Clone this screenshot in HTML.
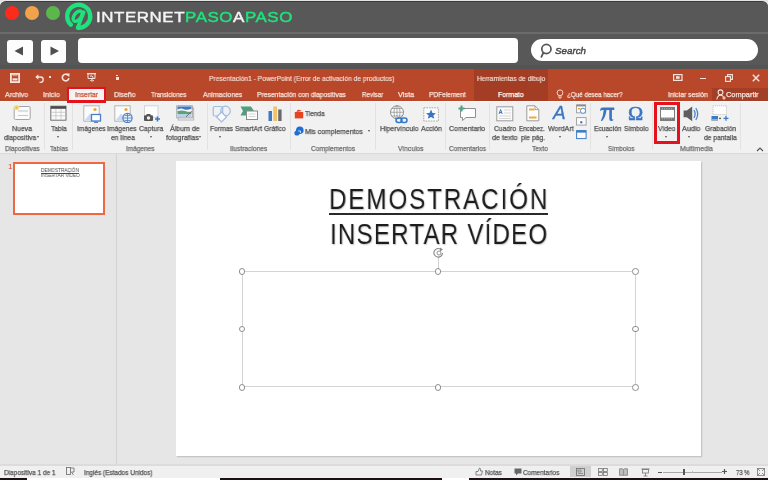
<!DOCTYPE html>
<html><head><meta charset="utf-8">
<style>
*{margin:0;padding:0;box-sizing:border-box}
html,body{width:768px;height:480px;overflow:hidden;background:#fff;font-family:"Liberation Sans",sans-serif}
.a{position:absolute}
.t{position:absolute;white-space:nowrap;line-height:1;transform-origin:0 0;will-change:transform}
.sk{-webkit-text-stroke:0.25px currentColor}
.sk2{-webkit-text-stroke:0.12px currentColor}
.sep{position:absolute;top:103px;width:1px;height:47px;background:#e2e2e2}
</style></head><body>

<div class="a" style="left:0;top:0;width:768px;height:14px;background:#e4e4e4"></div>
<div class="a" style="left:0;top:1px;width:768px;height:68px;background:#3c3c3c;border-radius:6px 6px 0 0"></div>
<div class="a" style="left:0;top:2px;width:768px;height:67px;background:#585858;border-radius:5px 5px 0 0"></div>
<div class="a" style="left:5.4px;top:5.8px;width:14px;height:14px;border-radius:50%;background:#fd2b1c"></div>
<div class="a" style="left:25.1px;top:6.2px;width:14px;height:14px;border-radius:50%;background:#f2a24b"></div>
<div class="a" style="left:45.5px;top:6.2px;width:14px;height:14px;border-radius:50%;background:#5db64b"></div>
<svg class="a" style="left:62px;top:0px" width="34" height="33" viewBox="0 0 34 33"><path d="M8.86 24.7 A11.5 11.5 0 1 1 15.9 27.77" fill="none" stroke="#20e27c" stroke-width="4.4" stroke-linecap="round"/><ellipse cx="15.6" cy="16.2" rx="6" ry="3.3" transform="rotate(-52 15.6 16.2)" fill="none" stroke="#20e27c" stroke-width="3.4"/><path d="M21.8 12.2 L15.9 27.2" stroke="#20e27c" stroke-width="3.6" stroke-linecap="round"/></svg>
<div class="t" style="left:95.8px;top:9.24px;font-size:15.4px;letter-spacing:0.5px;transform:scaleX(1.1);color:#f4f4f4;-webkit-text-stroke:0.45px #f4f4f4">INTERNET<span style="color:#20e27c;-webkit-text-stroke-color:#20e27c">PASO</span>A<span style="color:#20e27c;-webkit-text-stroke-color:#20e27c">PASO</span></div>
<div class="a" style="left:0;top:32px;width:768px;height:1.5px;background:#6b6b6b"></div>
<div class="a" style="left:0;top:65px;width:768px;height:4px;background:#545454"></div>
<div class="a" style="left:7px;top:40px;width:26px;height:22.5px;background:#fdfdfd;border-radius:3px"></div>
<div class="a" style="left:40.5px;top:40px;width:25.5px;height:22.5px;background:#fdfdfd;border-radius:3px"></div>
<svg class="a" style="left:13px;top:45px" width="14" height="12" viewBox="0 0 14 12"><path d="M1.5 6 L10 1.5 V10.5 Z" fill="#4e4e4e"/></svg>
<svg class="a" style="left:49px;top:45px" width="14" height="12" viewBox="0 0 14 12"><path d="M1.5 1.5 L10 6 L1.5 10.5 Z" fill="#4e4e4e"/></svg>
<div class="a" style="left:77.8px;top:37.8px;width:440.5px;height:25px;background:#fff;border-radius:4px"></div>
<div class="a" style="left:530.6px;top:38.8px;width:227px;height:22.5px;background:#fff;border-radius:11.5px"></div>
<svg class="a" style="left:538px;top:41px" width="18" height="18" viewBox="0 0 18 18"><circle cx="8.4" cy="8" r="4.6" fill="none" stroke="#555" stroke-width="1.7"/><path d="M5.4 11.6 L3.4 15.8" stroke="#555" stroke-width="1.8" stroke-linecap="round"/></svg>
<div class="t" style="left:555px;top:46.2px;font-size:9.6px;font-style:italic;color:#4a4a4a;-webkit-text-stroke:0.45px #4a4a4a;transform:scaleX(1.02)">Search</div>
<div class="a" style="left:0;top:69px;width:768px;height:32px;background:#b9482b"></div>
<div class="a" style="left:474.2px;top:69px;width:74px;height:31.5px;background:#a33d23"></div>
<div class="a" style="left:712px;top:87.8px;width:56px;height:12.8px;background:#a33f26"></div>
<svg class="a" style="left:10px;top:72.5px" width="10" height="10" viewBox="0 0 10 10"><rect x="0.9" y="0.9" width="8.2" height="8.2" fill="none" stroke="#f6e4dd" stroke-width="1.8"/><rect x="2.5" y="5.3" width="5" height="2.2" fill="#f6e4dd"/><rect x="2.5" y="1.8" width="5" height="1.4" fill="#f6e4dd" opacity="0.5"/></svg>
<svg class="a" style="left:34.5px;top:73.5px" width="10" height="9" viewBox="0 0 10 9"><path d="M2.5 3 H5.5 A2.7 2.7 0 0 1 5.5 8.4 H4.5" fill="none" stroke="#f6e4dd" stroke-width="1.4"/><path d="M0.3 3 L3.3 0.3 V5.7 Z" fill="#f6e4dd"/></svg>
<div class="a" style="left:49px;top:76px;width:2px;height:2px;background:#f6e4dd"></div>
<svg class="a" style="left:61.3px;top:73px" width="9" height="9" viewBox="0 0 9 9"><path d="M7 2.2 A3.3 3.3 0 1 0 7.9 5.2" fill="none" stroke="#f6e4dd" stroke-width="1.6"/><path d="M5 0.6 L8.6 0.6 L8.2 4.2 Z" fill="#f6e4dd"/></svg>
<svg class="a" style="left:87px;top:72.8px" width="9" height="9" viewBox="0 0 9 9"><path d="M0 0.7 H9" stroke="#f6e4dd" stroke-width="1.3"/><path d="M1 1 V5.5 H8 V1" fill="none" stroke="#f6e4dd" stroke-width="1"/><path d="M3 3.2 Q5.5 2 6 4 Q6.5 6.5 3.5 7.5 Q5 8.5 7 7.5" fill="none" stroke="#f6e4dd" stroke-width="1"/></svg>
<div class="a" style="left:116px;top:75px;width:2px;height:1px;background:#f6e4dd"></div>
<div class="a" style="left:115.5px;top:77px;width:3px;height:2.5px;background:#f6e4dd"></div>
<svg class="a" style="left:672.5px;top:74.2px" width="10" height="7" viewBox="0 0 10 7"><rect x="0.6" y="0.6" width="8.4" height="5.8" fill="none" stroke="#f6e4dd" stroke-width="1.2"/><rect x="3" y="2.2" width="3.6" height="2.6" fill="#f6e4dd"/></svg>
<div class="a" style="left:700.3px;top:77.6px;width:5.8px;height:1.6px;background:#f6e4dd"></div>
<svg class="a" style="left:725px;top:74px" width="8" height="8" viewBox="0 0 8 8"><rect x="0.6" y="2.6" width="4.8" height="4.8" fill="none" stroke="#f6e4dd" stroke-width="1.1"/><path d="M2.6 2.6 V0.6 H7.4 V5.4 H5.4" fill="none" stroke="#f6e4dd" stroke-width="1.1"/></svg>
<svg class="a" style="left:751.5px;top:74px" width="8" height="8" viewBox="0 0 8 8"><path d="M0.8 0.8 L7.2 7.2 M7.2 0.8 L0.8 7.2" stroke="#f6e4dd" stroke-width="1.4"/></svg>
<div class="a" style="left:67px;top:87.3px;width:39px;height:15.3px;background:#f3f3f3;border:2.4px solid #e5121d"></div>
<svg class="a" style="left:556px;top:89px" width="8" height="11" viewBox="0 0 8 11"><circle cx="4" cy="3.8" r="2.9" fill="none" stroke="#f6e4dd" stroke-width="0.9"/><path d="M3 6.6 V9 H5 V6.6" fill="none" stroke="#f6e4dd" stroke-width="0.9"/></svg>
<svg class="a" style="left:715.5px;top:89px" width="11" height="11" viewBox="0 0 11 11"><circle cx="4.5" cy="3.3" r="2.4" fill="none" stroke="#f6e4dd" stroke-width="1.1"/><path d="M0.8 10.5 Q1.4 6.3 4.5 6.3 Q6.5 6.3 7.4 7.6" fill="none" stroke="#f6e4dd" stroke-width="1.1"/><path d="M6.3 9 H9.8 M8 7.2 V10.8" stroke="#f6e4dd" stroke-width="1"/></svg>
<div class="a" style="left:0;top:100.6px;width:768px;height:52px;background:#f1f1f1"></div>
<div class="a" style="left:0;top:100.6px;width:768px;height:1.2px;background:#fafafa"></div>
<div class="a" style="left:67px;top:100.2px;width:39px;height:2.4px;background:#e5121d"></div>
<div class="sep" style="left:43.6px"></div>
<div class="sep" style="left:72.3px"></div>
<div class="sep" style="left:207px"></div>
<div class="sep" style="left:290.2px"></div>
<div class="sep" style="left:375.2px"></div>
<div class="sep" style="left:445.3px"></div>
<div class="sep" style="left:488.5px"></div>
<div class="sep" style="left:590px"></div>
<div class="sep" style="left:652.2px"></div>
<div class="sep" style="left:739.6px"></div>
<svg class="a" style="left:13px;top:104px" width="19" height="17" viewBox="0 0 19 17"><rect x="1.2" y="2.5" width="16" height="13" rx="1.3" fill="#fbfbfb" stroke="#a5a5a5" stroke-width="1"/><path d="M5 7 H15" stroke="#b9c3cf" stroke-width="1"/><path d="M5 11.5 H15" stroke="#c2c2c2" stroke-width="0.9"/><circle cx="3.6" cy="3.6" r="2.6" fill="#f6dc8a"/><circle cx="3.6" cy="3.6" r="1.2" fill="#f0b84a"/></svg>
<svg class="a" style="left:50px;top:105px" width="17" height="16" viewBox="0 0 17 16"><rect x="0.8" y="1.2" width="15.2" height="14" fill="#fafafa" stroke="#707070" stroke-width="1"/><rect x="0.8" y="1.2" width="15.2" height="2.6" fill="#4a4a4a"/><path d="M0.8 7.3 H16 M0.8 10.8 H16 M5.9 3.8 V15 M11 3.8 V15" stroke="#bdbdbd" stroke-width="0.7"/></svg>
<svg class="a" style="left:82.5px;top:105px" width="19" height="18" viewBox="0 0 19 18"><rect x="0.8" y="0.8" width="15.4" height="15.4" fill="#fbfbfb" stroke="#b5b5b5" stroke-width="1"/><path d="M1.5 15.5 L7 8.5 L11 13 L11 15.5 Z" fill="#c9dbef"/><circle cx="12" cy="4.5" r="1.6" fill="#eea33a"/><rect x="8.5" y="9.5" width="9" height="6.5" fill="#fff" stroke="#4e7ec3" stroke-width="1.3"/><path d="M13 16 V17.5 M11 17.6 H15" stroke="#4e7ec3" stroke-width="1"/></svg>
<svg class="a" style="left:114px;top:105px" width="19" height="18" viewBox="0 0 19 18"><rect x="0.8" y="0.8" width="15.4" height="15.4" fill="#fbfbfb" stroke="#b5b5b5" stroke-width="1"/><path d="M1.5 15.5 L7 8.5 L11 13 L11 15.5 Z" fill="#c9dbef"/><circle cx="12" cy="4.5" r="1.6" fill="#eea33a"/><circle cx="13.5" cy="13" r="4.6" fill="#e8eef7" stroke="#4e7ec3" stroke-width="1.2"/><path d="M9 13 H18 M13.5 8.5 V17.5 M10.5 10.5 H16.5 M10.5 15.5 H16.5" stroke="#4e7ec3" stroke-width="0.8"/></svg>
<svg class="a" style="left:142.5px;top:105px" width="18" height="17" viewBox="0 0 18 17"><rect x="1.5" y="0.8" width="13.5" height="11.5" fill="#fdfdfd" stroke="#cfcfcf" stroke-width="0.9"/><rect x="1" y="10.3" width="9" height="5.6" rx="1" fill="#555"/><rect x="3.5" y="9" width="4" height="2" fill="#555"/><circle cx="5.5" cy="13" r="1.7" fill="#f1f1f1"/><path d="M12 14 H17 M14.5 11.5 V16.5" stroke="#3a78c9" stroke-width="1.6"/></svg>
<svg class="a" style="left:175.5px;top:105px" width="19" height="16" viewBox="0 0 19 16"><rect x="2.2" y="3" width="15.5" height="12" fill="#f2f2f2" stroke="#b0b0b0" stroke-width="0.9"/><rect x="0.8" y="0.8" width="15.5" height="12" fill="#fff" stroke="#a0a0a0" stroke-width="1"/><rect x="1.5" y="1.5" width="14" height="3.5" fill="#3c78c3"/><path d="M1.5 4.6 Q5 2.8 8 4.2 T15.5 3.5 V5.5 H1.5 Z" fill="#eef4fb"/><path d="M1.5 6 Q6 4.8 10 6.2 T15.5 6 V9 H1.5 Z" fill="#5aa56e"/><rect x="1.5" y="9" width="14" height="3" fill="#b8d0ea"/><path d="M10 11.8 L15.5 6.5" stroke="#6e6e6e" stroke-width="1"/></svg>
<svg class="a" style="left:211.5px;top:104.5px" width="20" height="18" viewBox="0 0 20 18"><rect x="1.2" y="1.5" width="9.5" height="9.5" rx="1.5" fill="none" stroke="#9fbbe0" stroke-width="1.2"/><circle cx="13.5" cy="6" r="4.8" fill="none" stroke="#9fbbe0" stroke-width="1.2"/><path d="M9.5 7 L14.5 12 L9.5 17 L4.5 12 Z" fill="#fbfbfb" stroke="#9fbbe0" stroke-width="1.2"/></svg>
<svg class="a" style="left:239.5px;top:106px" width="19" height="15" viewBox="0 0 19 15"><path d="M0.5 0.5 H11 L14 5 L11 9.5 H0.5 L3 5 Z" fill="#4f9e7c"/><rect x="6.5" y="5" width="11" height="8.5" fill="#fdfdfd" stroke="#8c8c8c" stroke-width="1"/><path d="M8.5 8 H15.5 M8.5 10.5 H15.5" stroke="#cfcfcf" stroke-width="0.9"/></svg>
<svg class="a" style="left:267.5px;top:105.5px" width="15" height="16" viewBox="0 0 15 16"><rect x="0.5" y="5" width="3.5" height="10" fill="#3f79c0"/><rect x="5.3" y="0.5" width="3.7" height="14.5" fill="#f0c26a"/><rect x="10.2" y="3.5" width="3.4" height="11.5" fill="#6a6a6a"/></svg>
<svg class="a" style="left:294px;top:108.5px" width="10" height="10" viewBox="0 0 10 10"><path d="M0.8 3 H9.2 V9.4 H0.8 Z" fill="#e64420"/><path d="M2.5 3 Q3 0.5 5 0.8 L8 2 Z" fill="#e64420"/></svg>
<svg class="a" style="left:294px;top:126px" width="10" height="10" viewBox="0 0 10 10"><circle cx="5.8" cy="4.3" r="3.8" fill="#1f6fd1"/><circle cx="3" cy="7" r="2.6" fill="#1f6fd1"/><path d="M4 5 H6.5 V7" stroke="#f1f1f1" stroke-width="0.8" fill="none"/></svg>
<svg class="a" style="left:389px;top:104.5px" width="20" height="19" viewBox="0 0 20 19"><circle cx="8" cy="7.3" r="6.5" fill="#fafafa" stroke="#8d8d8d" stroke-width="1"/><path d="M1.5 7.3 H14.5 M8 0.8 V13.8 M3 3.5 H13 M3 11 H13" stroke="#8d8d8d" stroke-width="0.7"/><ellipse cx="8" cy="7.3" rx="3" ry="6.5" fill="none" stroke="#8d8d8d" stroke-width="0.7"/><rect x="7" y="13" width="6" height="4.5" rx="2.2" fill="none" stroke="#3478c8" stroke-width="1.5"/><rect x="12" y="13" width="6" height="4.5" rx="2.2" fill="none" stroke="#3478c8" stroke-width="1.5"/></svg>
<svg class="a" style="left:423px;top:106.5px" width="17" height="15" viewBox="0 0 17 15"><rect x="0.8" y="0.8" width="14.6" height="13.2" fill="#fbfbfb" stroke="#9d9d9d" stroke-width="0.9" stroke-dasharray="1.6 1"/><path d="M8 2.6 L9.5 6 L13 6.2 L10.3 8.4 L11.3 11.8 L8 9.9 L4.7 11.8 L5.7 8.4 L3 6.2 L6.5 6 Z" fill="#3873c4"/></svg>
<svg class="a" style="left:457.5px;top:104.5px" width="19" height="17" viewBox="0 0 19 17"><path d="M2.5 3.5 H17.5 V12.5 H8 L4.5 15.5 V12.5 H2.5 Z" fill="#fdfdfd" stroke="#8f8f8f" stroke-width="1"/><path d="M3.5 0.5 V6.5 M0.5 3.5 H6.5" stroke="#4fa384" stroke-width="2"/></svg>
<svg class="a" style="left:496px;top:105.5px" width="18" height="16" viewBox="0 0 18 16"><rect x="0.8" y="0.8" width="16" height="14" fill="#fbfbfb" stroke="#9a9a9a" stroke-width="1"/><path d="M3 8 L4.6 3.5 L6.2 8 M3.6 6.5 H5.6" fill="none" stroke="#3a75c4" stroke-width="1"/><path d="M8 4 H15 M8 7 H15 M3 10 H15 M3 12.5 H15" stroke="#cfcfcf" stroke-width="0.8"/></svg>
<svg class="a" style="left:526px;top:105px" width="14" height="17" viewBox="0 0 14 17"><path d="M0.8 0.8 H9 L12.8 4.6 V15.8 H0.8 Z" fill="#fdfdfd" stroke="#9a9a9a" stroke-width="1"/><path d="M9 0.8 V4.6 H12.8" fill="none" stroke="#9a9a9a" stroke-width="0.9"/><path d="M3 4.5 H8.5 M3 12.5 H10.5" stroke="#eda93a" stroke-width="1.8"/></svg>
<div class="t" style="left:552.5px;top:104px;font-size:18px;font-style:italic;font-family:'Liberation Sans',sans-serif;color:#3a75c4;transform:scaleX(1.05);-webkit-text-stroke:0.3px #3a75c4">A</div>
<svg class="a" style="left:576px;top:104px" width="11" height="10" viewBox="0 0 11 10"><rect x="0.6" y="0.8" width="9" height="8" fill="#fbfbfb" stroke="#9a9a9a" stroke-width="0.9"/><rect x="0.6" y="0.8" width="9" height="1.6" fill="#8a8a8a"/><circle cx="7" cy="6.8" r="2.6" fill="#fff" stroke="#4c84c8" stroke-width="0.9"/><rect x="2" y="4" width="2.5" height="1.5" fill="#eda93a"/></svg>
<svg class="a" style="left:576px;top:117px" width="11" height="9" viewBox="0 0 11 9"><rect x="0.6" y="0.6" width="9.5" height="7.5" fill="#fbfbfb" stroke="#9a9a9a" stroke-width="0.9"/><rect x="4.3" y="4.3" width="2" height="2" fill="#2f68b8"/></svg>
<svg class="a" style="left:576px;top:130px" width="11" height="9.5" viewBox="0 0 11 9.5"><rect x="0.6" y="0.6" width="9.5" height="8" fill="#fbfbfb" stroke="#3e7ac6" stroke-width="1"/><rect x="0.6" y="0.6" width="9.5" height="2" fill="#3e7ac6"/></svg>
<svg class="a" style="left:598px;top:105.8px" width="18" height="17" viewBox="0 0 18 17"><path d="M2.3 3 Q3 1.6 5.2 1.6 H16.3 V4.1 H4.8 Q3.2 4.1 2.3 5.2 Z" fill="#3a75c4"/><path d="M5.8 3.5 H8.6 Q7.8 10.5 4.6 14.6 Q3.8 15.3 2.8 14.9 Q5.3 10 5.8 3.5 Z" fill="#3a75c4"/><path d="M11.3 3.5 H13.9 V12.5 Q13.9 13.9 15.6 13.4 Q15.2 15 13.2 15 Q11.3 15 11.3 12.8 Z" fill="#3a75c4"/></svg>
<div class="t" style="left:627.6px;top:104.4px;font-size:19.5px;font-family:'Liberation Serif',serif;color:#3a75c4;-webkit-text-stroke:0.6px #3a75c4;transform:scaleX(1.05)">Ω</div>
<div class="a" style="left:654px;top:101.9px;width:26.3px;height:42px;border:3px solid #e5121d"></div>
<svg class="a" style="left:659.5px;top:106.5px" width="15" height="14" viewBox="0 0 15 14"><rect x="0.5" y="0.5" width="14" height="13" fill="#fdfdfd" stroke="#7c7c7c" stroke-width="1"/><rect x="0.5" y="0.5" width="14" height="2.4" fill="#767676"/><rect x="0.5" y="10.6" width="14" height="2.4" fill="#767676"/><path d="M1.8 1.7 H13.5 M1.8 11.8 H13.5" stroke="#d8d8d8" stroke-width="0.7" stroke-dasharray="1.1 1.2"/></svg>
<svg class="a" style="left:682.5px;top:105.5px" width="17" height="16" viewBox="0 0 17 16"><path d="M0.6 4.6 H3.8 L9.2 0.6 V15.2 L3.8 11.2 H0.6 Z" fill="#5e5e5e"/><path d="M11 4.2 Q13.2 8 11 11.8" fill="none" stroke="#4d84c8" stroke-width="1.3"/><path d="M12.8 2 Q16.6 8 12.8 14" fill="none" stroke="#4d84c8" stroke-width="1.3"/></svg>
<svg class="a" style="left:710.5px;top:104.5px" width="19" height="17" viewBox="0 0 19 17"><rect x="2" y="0.8" width="13.5" height="8.7" fill="#fdfdfd" stroke="#bdbdbd" stroke-width="0.8" stroke-dasharray="1.2 0.8"/><rect x="0.5" y="11" width="6.5" height="4.5" fill="#3a7bc8"/><rect x="0.5" y="14" width="6.5" height="1.6" fill="#aaa"/><circle cx="9" cy="13.3" r="0.9" fill="#444"/><path d="M12.5 13.3 H17.5 M15 10.8 V15.8" stroke="#3a7bc8" stroke-width="1.3"/></svg>
<svg class="a" style="left:756px;top:145.5px" width="8" height="6" viewBox="0 0 8 6"><path d="M1 5 L4 2 L7 5" fill="none" stroke="#555" stroke-width="1.2"/></svg>
<div class="a" style="left:36.8px;top:136.3px;width:0;height:0;border-left:1.7px solid transparent;border-right:1.7px solid transparent;border-top:2.4px solid #505050"></div>
<div class="a" style="left:56.5px;top:136.3px;width:0;height:0;border-left:1.7px solid transparent;border-right:1.7px solid transparent;border-top:2.4px solid #505050"></div>
<div class="a" style="left:150.0px;top:136.3px;width:0;height:0;border-left:1.7px solid transparent;border-right:1.7px solid transparent;border-top:2.4px solid #505050"></div>
<div class="a" style="left:199.10000000000002px;top:136.3px;width:0;height:0;border-left:1.7px solid transparent;border-right:1.7px solid transparent;border-top:2.4px solid #505050"></div>
<div class="a" style="left:219.3px;top:136.3px;width:0;height:0;border-left:1.7px solid transparent;border-right:1.7px solid transparent;border-top:2.4px solid #505050"></div>
<div class="a" style="left:367.5px;top:129.70000000000002px;width:0;height:0;border-left:1.7px solid transparent;border-right:1.7px solid transparent;border-top:2.4px solid #505050"></div>
<div class="a" style="left:559.0999999999999px;top:136.3px;width:0;height:0;border-left:1.7px solid transparent;border-right:1.7px solid transparent;border-top:2.4px solid #505050"></div>
<div class="a" style="left:605.5px;top:136.3px;width:0;height:0;border-left:1.7px solid transparent;border-right:1.7px solid transparent;border-top:2.4px solid #505050"></div>
<div class="a" style="left:664.5999999999999px;top:136.3px;width:0;height:0;border-left:1.7px solid transparent;border-right:1.7px solid transparent;border-top:2.4px solid #505050"></div>
<div class="a" style="left:688.3px;top:136.3px;width:0;height:0;border-left:1.7px solid transparent;border-right:1.7px solid transparent;border-top:2.4px solid #505050"></div>
<div class="a" style="left:0;top:152.6px;width:768px;height:312px;background:#e6e6e6"></div>
<div class="a" style="left:0;top:152.6px;width:768px;height:1px;background:#dadada"></div>
<div class="a" style="left:116px;top:153px;width:1px;height:312px;background:#d3d3d3"></div>
<div class="t" style="left:7.6px;top:163.2px;font-size:8px;color:#d04a2c">1</div>
<div class="a" style="left:13.2px;top:161.9px;width:91.4px;height:53.3px;background:#fff;border:2px solid #ee6843"></div>
<div class="t" style="left:40.8px;top:169px;font-size:4.9px;color:#444;text-decoration:underline;transform:scaleX(0.95)">DEMOSTRACIÓN</div>
<div class="t" style="left:41px;top:174.3px;font-size:4.9px;color:#555;transform:scaleX(0.95)">INSERTAR VÍDEO</div>
<div class="a" style="left:176px;top:161px;width:525px;height:295px;background:#fff;box-shadow:0.8px 0.8px 1.2px rgba(0,0,0,0.18)"></div>
<div class="a" style="left:328.8px;top:213.4px;width:219.2px;height:1.8px;background:#2a2a2a"></div>
<div class="a" style="left:241.5px;top:270.8px;width:394px;height:116.2px;border:1px solid #d4d4d4"></div>
<div class="a" style="left:438px;top:257px;width:1px;height:14px;background:#d0d0d0"></div>
<div class="a" style="left:238.5px;top:267.90000000000003px;width:6.8px;height:6.8px;border-radius:50%;background:#fff;border:1.5px solid #8e8e8e"></div>
<div class="a" style="left:434.70000000000005px;top:267.90000000000003px;width:6.8px;height:6.8px;border-radius:50%;background:#fff;border:1.5px solid #8e8e8e"></div>
<div class="a" style="left:632.2px;top:267.90000000000003px;width:6.8px;height:6.8px;border-radius:50%;background:#fff;border:1.5px solid #8e8e8e"></div>
<div class="a" style="left:238.5px;top:325.6px;width:6.8px;height:6.8px;border-radius:50%;background:#fff;border:1.5px solid #8e8e8e"></div>
<div class="a" style="left:632.2px;top:325.6px;width:6.8px;height:6.8px;border-radius:50%;background:#fff;border:1.5px solid #8e8e8e"></div>
<div class="a" style="left:238.5px;top:383.8px;width:6.8px;height:6.8px;border-radius:50%;background:#fff;border:1.5px solid #8e8e8e"></div>
<div class="a" style="left:434.70000000000005px;top:383.8px;width:6.8px;height:6.8px;border-radius:50%;background:#fff;border:1.5px solid #8e8e8e"></div>
<div class="a" style="left:632.2px;top:383.8px;width:6.8px;height:6.8px;border-radius:50%;background:#fff;border:1.5px solid #8e8e8e"></div>
<svg class="a" style="left:433px;top:246.5px" width="12" height="12" viewBox="0 0 12 12"><path d="M9.5 6 A4.3 4.3 0 1 1 7.5 2.2" fill="none" stroke="#8a8a8a" stroke-width="1.1"/><circle cx="6" cy="6" r="2" fill="none" stroke="#8a8a8a" stroke-width="0.9"/><path d="M7 0.5 L10 2.5 L7 4.5 Z" fill="#8a8a8a"/></svg>
<div class="a" style="left:0;top:464px;width:768px;height:2px;background:#dcdcdc"></div>
<div class="a" style="left:0;top:466px;width:768px;height:12px;background:#f0f0f0"></div>
<svg class="a" style="left:66px;top:467px" width="9" height="9" viewBox="0 0 9 9"><rect x="0.5" y="0.5" width="4" height="7" fill="none" stroke="#777" stroke-width="0.9"/><path d="M4.5 1 H8 V5 L5.5 5 L7.5 8" fill="none" stroke="#777" stroke-width="0.9"/></svg>
<svg class="a" style="left:475px;top:467px" width="8" height="9" viewBox="0 0 8 9"><path d="M1 8 V4.5 H3 L4.5 1 Q5.5 1 5.5 2.5 V4 H7.5 L6.5 8 Z" fill="none" stroke="#777" stroke-width="0.9"/></svg>
<svg class="a" style="left:513.5px;top:467.5px" width="8" height="8" viewBox="0 0 8 8"><path d="M0.5 0.5 H7.5 V5.5 H4 L2 7.5 V5.5 H0.5 Z" fill="#666"/></svg>
<div class="a" style="left:570.4px;top:466px;width:21px;height:11px;background:#d0d0d0"></div>
<svg class="a" style="left:576px;top:468px" width="9" height="8" viewBox="0 0 9 8"><rect x="0.5" y="0.5" width="8" height="7" fill="none" stroke="#777" stroke-width="0.9"/><rect x="2" y="2" width="3" height="2" fill="none" stroke="#777" stroke-width="0.7"/><path d="M2 5.5 H7" stroke="#777" stroke-width="0.7"/></svg>
<svg class="a" style="left:597.5px;top:468px" width="10" height="8" viewBox="0 0 10 8"><rect x="0.5" y="0.5" width="3.8" height="3" fill="none" stroke="#777" stroke-width="0.8"/><rect x="5.5" y="0.5" width="3.8" height="3" fill="none" stroke="#777" stroke-width="0.8"/><rect x="0.5" y="4.5" width="3.8" height="3" fill="none" stroke="#777" stroke-width="0.8"/><rect x="5.5" y="4.5" width="3.8" height="3" fill="none" stroke="#777" stroke-width="0.8"/></svg>
<svg class="a" style="left:619px;top:468px" width="9" height="8" viewBox="0 0 9 8"><path d="M0.5 0.8 H3.8 L4.5 1.5 L5.2 0.8 H8.5 V7.3 H5.2 L4.5 7.8 L3.8 7.3 H0.5 Z" fill="#bdbdbd" stroke="#808080" stroke-width="0.8"/><path d="M4.5 1.5 V7.5" stroke="#808080" stroke-width="0.7"/></svg>
<svg class="a" style="left:640.5px;top:467.5px" width="9" height="9" viewBox="0 0 9 9"><path d="M0.5 1 H8.5" stroke="#777" stroke-width="1"/><rect x="1.5" y="1.5" width="6" height="3.5" fill="none" stroke="#777" stroke-width="0.8"/><path d="M4.5 5 V8 M2.5 8 H6.5" stroke="#777" stroke-width="0.8"/></svg>
<div class="a" style="left:658.3px;top:471.5px;width:3.4px;height:1.2px;background:#555"></div>
<div class="a" style="left:663px;top:471.8px;width:58.7px;height:0.8px;background:#a8a8a8"></div>
<div class="a" style="left:683.4px;top:469px;width:1.8px;height:6px;background:#555"></div>
<div class="a" style="left:692px;top:471px;width:1px;height:2px;background:#bbb"></div>
<svg class="a" style="left:722.3px;top:469px" width="5" height="5" viewBox="0 0 5 5"><path d="M0 2.5 H5 M2.5 0 V5" stroke="#555" stroke-width="1.2"/></svg>
<svg class="a" style="left:756.5px;top:468px" width="8" height="8" viewBox="0 0 8 8"><rect x="0.5" y="0.5" width="7" height="7" fill="none" stroke="#777" stroke-width="0.8"/><path d="M0.5 0.5 L3 3 M7.5 0.5 L5 3 M0.5 7.5 L3 5 M7.5 7.5 L5 5" stroke="#777" stroke-width="0.8"/></svg>
<div class="a" style="left:0;top:477.6px;width:27px;height:2.4px;background:#1c1010"></div>
<div class="a" style="left:219.8px;top:477.6px;width:222px;height:2.4px;background:#1c1010"></div>
<div class="a" style="left:469px;top:477.6px;width:299px;height:2.4px;background:#1c1010"></div>
<div class="t sk2" style="left:209.1px;top:74.6px;font-size:7.2px;color:#f6e4dd;transform:scaleX(0.9303);">Presentación1 - PowerPoint (Error de activación de productos)</div>
<div class="t sk2" style="left:477.3px;top:75.2px;font-size:7.0px;color:#f6e4dd;transform:scaleX(0.9432);">Herramientas de dibujo</div>
<div class="t sk" style="left:5px;top:91px;font-size:7.4px;color:#f6e4dd;transform:scaleX(0.9353);">Archivo</div>
<div class="t sk" style="left:42.5px;top:91px;font-size:7.4px;color:#f6e4dd;transform:scaleX(0.9721);">Inicio</div>
<div class="t sk" style="left:113.5px;top:91px;font-size:7.4px;color:#f6e4dd;transform:scaleX(0.9324);">Diseño</div>
<div class="t sk" style="left:151px;top:91px;font-size:7.4px;color:#f6e4dd;transform:scaleX(0.8483);">Transiciones</div>
<div class="t sk" style="left:202.5px;top:91px;font-size:7.4px;color:#f6e4dd;transform:scaleX(0.9302);">Animaciones</div>
<div class="t sk" style="left:257.3px;top:91px;font-size:7.4px;color:#f6e4dd;transform:scaleX(0.9086);">Presentación con diapositivas</div>
<div class="t sk" style="left:361.5px;top:91px;font-size:7.4px;color:#f6e4dd;transform:scaleX(0.8503);">Revisar</div>
<div class="t sk" style="left:397.9px;top:91px;font-size:7.4px;color:#f6e4dd;transform:scaleX(0.9811);">Vista</div>
<div class="t sk" style="left:428.75px;top:91px;font-size:7.4px;color:#f6e4dd;transform:scaleX(0.8906);">PDFelement</div>
<div class="t sk" style="left:566.5px;top:91px;font-size:7.4px;color:#f6e4dd;transform:scaleX(0.8513);">¿Qué desea hacer?</div>
<div class="t sk" style="left:667.9px;top:91px;font-size:7.4px;color:#f6e4dd;transform:scaleX(0.9215);">Iniciar sesión</div>
<div class="t sk" style="left:726px;top:91px;font-size:7.4px;color:#f6e4dd;transform:scaleX(1.0046);">Compartir</div>
<div class="t sk" style="left:75px;top:91px;font-size:7.4px;color:#c9502f;transform:scaleX(0.9198);">Insertar</div>
<div class="t sk" style="left:498px;top:90.6px;font-size:7.4px;color:#ffffff;transform:scaleX(0.9320);">Formato</div>
<div class="t sk" style="left:12.4px;top:125px;font-size:7.4px;color:#505050;transform:scaleX(0.9386);">Nueva</div>
<div class="t sk" style="left:3.6px;top:134px;font-size:7.4px;color:#505050;transform:scaleX(0.9236);">diapositiva</div>
<div class="t sk" style="left:50.8px;top:125px;font-size:7.4px;color:#505050;transform:scaleX(0.8962);">Tabla</div>
<div class="t sk" style="left:76.9px;top:125px;font-size:7.4px;color:#505050;transform:scaleX(0.8817);">Imágenes</div>
<div class="t sk" style="left:107.4px;top:125px;font-size:7.4px;color:#505050;transform:scaleX(0.9131);">Imágenes</div>
<div class="t sk" style="left:110.5px;top:134px;font-size:7.4px;color:#505050;transform:scaleX(0.9062);">en línea</div>
<div class="t sk" style="left:139.3px;top:125px;font-size:7.4px;color:#505050;transform:scaleX(0.9223);">Captura</div>
<div class="t sk" style="left:169.9px;top:125px;font-size:7.4px;color:#505050;transform:scaleX(0.9499);">Álbum de</div>
<div class="t sk" style="left:165.7px;top:134px;font-size:7.4px;color:#505050;transform:scaleX(0.9411);">fotografías</div>
<div class="t sk" style="left:209.8px;top:125px;font-size:7.4px;color:#505050;transform:scaleX(0.9198);">Formas</div>
<div class="t sk" style="left:234.7px;top:125px;font-size:7.4px;color:#505050;transform:scaleX(0.9350);">SmartArt</div>
<div class="t sk" style="left:264.4px;top:125px;font-size:7.4px;color:#505050;transform:scaleX(0.9084);">Gráfico</div>
<div class="t sk" style="left:379.8px;top:125px;font-size:7.4px;color:#505050;transform:scaleX(0.9363);">Hipervínculo</div>
<div class="t sk" style="left:420.8px;top:125px;font-size:7.4px;color:#505050;transform:scaleX(0.9404);">Acción</div>
<div class="t sk" style="left:449.2px;top:125px;font-size:7.4px;color:#505050;transform:scaleX(0.9467);">Comentario</div>
<div class="t sk" style="left:494px;top:125px;font-size:7.4px;color:#505050;transform:scaleX(0.9091);">Cuadro</div>
<div class="t sk" style="left:492px;top:134px;font-size:7.4px;color:#505050;transform:scaleX(0.9729);">de texto</div>
<div class="t sk" style="left:519.4px;top:125px;font-size:7.4px;color:#505050;transform:scaleX(0.8370);">Encabez.</div>
<div class="t sk" style="left:520.6px;top:134px;font-size:7.4px;color:#505050;transform:scaleX(0.9101);">pie pág.</div>
<div class="t sk" style="left:548.3px;top:125px;font-size:7.4px;color:#505050;transform:scaleX(0.9481);">WordArt</div>
<div class="t sk" style="left:593.6px;top:125px;font-size:7.4px;color:#505050;transform:scaleX(0.9059);">Ecuación</div>
<div class="t sk" style="left:623.75px;top:125px;font-size:7.4px;color:#505050;transform:scaleX(0.9067);">Símbolo</div>
<div class="t sk" style="left:658.4px;top:125px;font-size:7.4px;color:#505050;transform:scaleX(0.9024);">Vídeo</div>
<div class="t sk" style="left:681.7px;top:125px;font-size:7.4px;color:#505050;transform:scaleX(0.9723);">Audio</div>
<div class="t sk" style="left:704.5px;top:125px;font-size:7.4px;color:#505050;transform:scaleX(0.9102);">Grabación</div>
<div class="t sk" style="left:703.8px;top:134px;font-size:7.4px;color:#505050;transform:scaleX(0.9052);">de pantalla</div>
<div class="t sk" style="left:305.4px;top:110.3px;font-size:7.4px;color:#505050;transform:scaleX(0.8790);">Tienda</div>
<div class="t sk" style="left:305px;top:127.6px;font-size:7.4px;color:#505050;transform:scaleX(0.9376);">Mis complementos</div>
<div class="t sk" style="left:5px;top:145px;font-size:7.2px;color:#6c6c6c;transform:scaleX(0.8912);">Diapositivas</div>
<div class="t sk" style="left:49.5px;top:145px;font-size:7.2px;color:#6c6c6c;transform:scaleX(0.8671);">Tablas</div>
<div class="t sk" style="left:125.6px;top:145px;font-size:7.2px;color:#6c6c6c;transform:scaleX(0.9006);">Imágenes</div>
<div class="t sk" style="left:230px;top:145px;font-size:7.2px;color:#6c6c6c;transform:scaleX(0.9256);">Ilustraciones</div>
<div class="t sk" style="left:310.6px;top:145px;font-size:7.2px;color:#6c6c6c;transform:scaleX(0.9132);">Complementos</div>
<div class="t sk" style="left:397.9px;top:145px;font-size:7.2px;color:#6c6c6c;transform:scaleX(0.9230);">Vínculos</div>
<div class="t sk" style="left:448.7px;top:145px;font-size:7.2px;color:#6c6c6c;transform:scaleX(0.9066);">Comentarios</div>
<div class="t sk" style="left:531.9px;top:145px;font-size:7.2px;color:#6c6c6c;transform:scaleX(0.9224);">Texto</div>
<div class="t sk" style="left:607.7px;top:145px;font-size:7.2px;color:#6c6c6c;transform:scaleX(0.8870);">Símbolos</div>
<div class="t sk" style="left:680px;top:145px;font-size:7.2px;color:#6c6c6c;transform:scaleX(0.9454);">Multimedia</div>
<div class="t sk" style="left:4.2px;top:468.8px;font-size:7.0px;color:#555;transform:scaleX(0.9263);">Diapositiva 1 de 1</div>
<div class="t sk" style="left:83.75px;top:468.8px;font-size:7.0px;color:#555;transform:scaleX(0.9216);">Inglés (Estados Unidos)</div>
<div class="t sk" style="left:485.4px;top:468.8px;font-size:7.0px;color:#555;transform:scaleX(0.9211);">Notas</div>
<div class="t sk" style="left:523.2px;top:468.8px;font-size:7.0px;color:#555;transform:scaleX(0.9159);">Comentarios</div>
<div class="t sk" style="left:735.8px;top:468.8px;font-size:7.0px;color:#555;transform:scaleX(0.8394);">73 %</div>
<div class="t" style="left:328.7px;top:184.3px;font-size:29.5px;letter-spacing:2.3px;transform:scaleX(0.82);color:#1c1c1c;text-shadow:0.8px 1px 1.5px rgba(0,0,0,0.22)">DEMOSTRACIÓN</div>
<div class="t" style="left:329.8px;top:219px;font-size:29.5px;letter-spacing:1.42px;transform:scaleX(0.82);color:#1c1c1c;text-shadow:0.8px 1px 1.5px rgba(0,0,0,0.22)">INSERTAR VÍDEO</div>
</body></html>
